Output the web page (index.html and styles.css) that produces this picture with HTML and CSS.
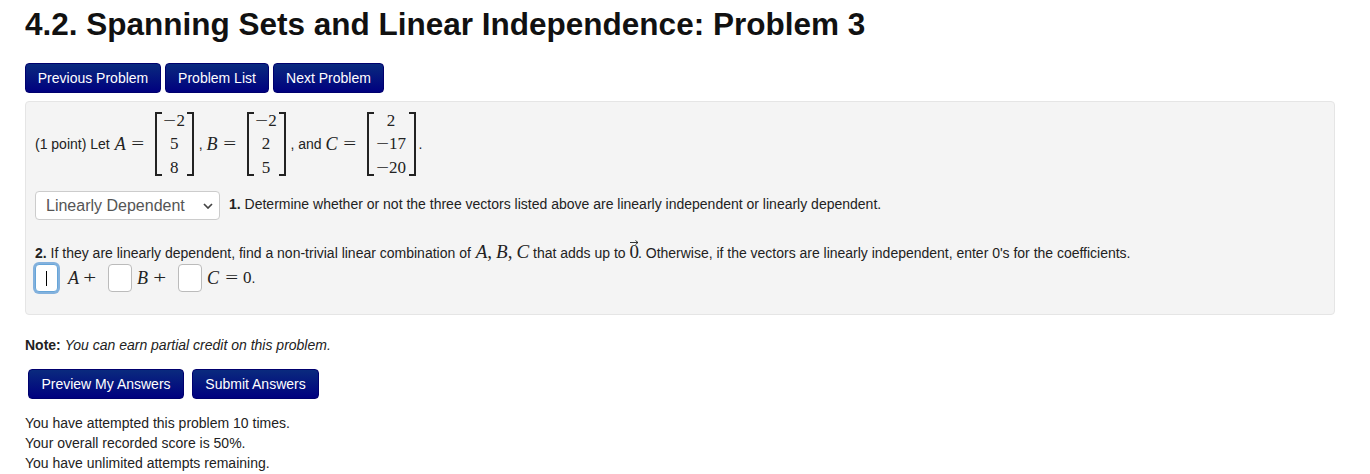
FILE: index.html
```html
<!DOCTYPE html>
<html lang="en">
<head>
<meta charset="utf-8">
<title>4.2. Spanning Sets and Linear Independence: Problem 3</title>
<link rel="stylesheet" href="styles.css">
</head>
<body>
<h1 class="title">4.2. Spanning Sets and Linear Independence: Problem 3</h1>
<nav class="btn-row nav-row">
  <a class="btn btn-prev">Previous Problem</a>
  <a class="btn btn-list">Problem List</a>
  <a class="btn btn-next">Next Problem</a>
</nav>
<section class="panel">
  <div class="statement">
    <span class="lead">(1 point) Let</span>
    <i class="var">A</i><span class="op eq"><span>=</span></span>
    <span class="matrix m-two"><span><span class="minus">−</span>2</span><span>5</span><span>8</span></span>
    <span class="sep sep-b">, </span>
    <i class="var">B</i><span class="op eq"><span>=</span></span>
    <span class="matrix m-two"><span><span class="minus">−</span>2</span><span>2</span><span>5</span></span>
    <span class="sep sep-c">, and </span>
    <i class="var">C</i><span class="op eq"><span>=</span></span>
    <span class="matrix m-three"><span>2</span><span><span class="minus">−</span>17</span><span><span class="minus">−</span>20</span></span>
    <span class="sep sep-end">.</span>
  </div>
  <div class="part-one">
    <div class="select">Linearly Dependent
      <svg class="chev" width="10" height="6" viewBox="0 0 10 6"><path d="M1 1l4 4 4-4" fill="none" stroke="#444" stroke-width="1.7"/></svg>
    </div>
    <p><b>1.</b> Determine whether or not the three vectors listed above are linearly independent or linearly dependent.</p>
  </div>
  <p class="part-two"><b>2.</b> If they are linearly dependent, find a non-trivial linear combination of <span class="big"><i class="gap-a">A</i>,<i class="gap">B</i>,<i class="gap">C</i></span> that adds up to <span class="big vec">0<svg class="arrow" width="9" height="5" viewBox="0 0 9 5"><path d="M0 2.5h8M5.5 .5l2.5 2-2.5 2" fill="none" stroke="#222" stroke-width=".9"/></svg></span><span class="rest">. Otherwise, if the vectors are linearly independent, enter 0's for the coefficients.</span></p>
  <div class="answers">
    <span class="box focus"><span class="caret"></span></span>
    <i class="var a1">A</i><span class="op plus"><span>+</span></span>
    <span class="box box-b"></span>
    <i class="var a2">B</i><span class="op plus plus-b"><span>+</span></span>
    <span class="box box-c"></span>
    <i class="var a2">C</i><span class="op eq eq-0"><span>=</span></span><span class="zero">0</span><span class="period">.</span>
  </div>
</section>
<p class="note"><b>Note:</b> <i>You can earn partial credit on this problem.</i></p>
<div class="btn-row submit-row">
  <a class="btn btn-preview">Preview My Answers</a>
  <a class="btn btn-submit">Submit Answers</a>
</div>
<div class="status">
  <div>You have attempted this problem 10 times.</div>
  <div>Your overall recorded score is 50%.</div>
  <div>You have unlimited attempts remaining.</div>
</div>
</body>
</html>
```
FILE: styles.css
```css
* { box-sizing: border-box; }
html, body { height: 474px; overflow: hidden; }
body {
  margin: 0;
  padding: 0 35px 0 25px;
  background: #fff;
  color: #222;
  font-family: "Liberation Sans", Arial, sans-serif;
  font-size: 14px;
  line-height: 20px;
}
.title {
  margin: 4px 0 0;
  color: #111;
  font-size: 31.5px;
  line-height: 40px;
  font-weight: 700;
}
.btn-row { display: flex; gap: 4px; }
.nav-row { margin-top: 19px; }
.btn {
  display: block;
  height: 30px;
  padding: 0;
  border: 1px solid #00006e;
  border-radius: 4px;
  background: linear-gradient(#0a2a7e, #00007f);
  color: #fff;
  font-size: 14px;
  line-height: 28px;
  text-align: center;
  white-space: nowrap;
}
.btn-prev { width: 136px; }
.btn-list { width: 104px; }
.btn-next { width: 111px; }
.btn-preview { width: 156px; }
.btn-submit { width: 127px; }
.panel {
  height: 214px;
  margin-top: 8px;
  padding: 10px 9px 0;
  background: #f4f4f4;
  border: 1px solid #e5e5e5;
  border-radius: 4px;
}
.statement { display: flex; align-items: center; height: 64px; }
.lead, .sep { white-space: pre; }
.var {
  font-family: "Liberation Serif", serif;
  font-size: 18px;
  line-height: 20px;
  margin-left: 5px;
}
.op {
  display: inline-flex;
  justify-content: center;
  width: 13px;
  font-family: "Liberation Serif", serif;
  font-size: 17px;
}
.op > span { display: inline-block; transform: scaleX(1.35); }
.eq { margin: 0 10px 0 6px; }
.sep-b, .sep-c { margin-left: 5px; margin-right: -5px; }
.sep-end { margin-left: 3px; }
.matrix {
  display: flex;
  flex-direction: column;
  align-items: center;
  justify-content: center;
  height: 64px;
  font-family: "Liberation Serif", serif;
  font-size: 17px;
  line-height: 23.5px;
  border-left: 2px solid #222;
  border-right: 2px solid #222;
  background:
    linear-gradient(#222,#222) left top/5px 2px no-repeat,
    linear-gradient(#222,#222) right top/5px 2px no-repeat,
    linear-gradient(#222,#222) left bottom/5px 2px no-repeat,
    linear-gradient(#222,#222) right bottom/5px 2px no-repeat;
}
.m-two { width: 39px; }
.m-three { width: 49px; }
.minus { display: inline-block; width: 13px; text-align: center; transform: scaleX(1.35); }
.part-one { display: flex; align-items: center; gap: 9px; margin-top: 15px; }
.part-one p { margin: 0; position: relative; top: -2px; }
.select {
  position: relative;
  width: 185px;
  height: 29px;
  padding: 0 10px;
  background: #fff;
  border: 1px solid #ccc;
  border-radius: 4px;
  color: #555;
  font-size: 16px;
  line-height: 28px;
}
.chev { position: absolute; right: 6px; top: 11px; }
.part-two { margin: 23px 0 0; white-space: nowrap; height: 20px; }
.big { font-family: "Liberation Serif", serif; font-size: 19px; line-height: 18px; }
.gap-a { margin-left: 1px; }
.gap { margin-left: 4px; }
.vec { position: relative; display: inline-block; margin-right: -1px; }
.rest { letter-spacing: -0.012px; }
.arrow { position: absolute; left: 0; top: -3px; }
.answers { display: flex; align-items: center; height: 30px; font-family: "Liberation Serif", serif; font-size: 17px; }
.box {
  display: block;
  width: 24px;
  height: 28px;
  background: #fff;
  border: 1px solid #bbb;
  border-radius: 4px;
}
.focus {
  display: flex;
  align-items: center;
  justify-content: center;
  width: 23px;
  border-color: #66a5d8;
  box-shadow: 0 0 0 2px rgba(102,160,215,.8);
}
.caret { width: 1px; height: 15px; background: #000; }
.a1 { margin-left: 10px; }
.a2 { margin-left: 5px; }
.plus { margin: 0 12px 0 4px; }
.plus-b { margin: 0 12px 0 5px; }
.eq-0 { margin: 0 5px 0 6px; }
.zero { font-size: 17px; }
.period { font-family: "Liberation Sans", sans-serif; font-size: 14px; }
.note { margin: 20px 0 0; font-size: 14px; }
.submit-row { margin: 14px 0 0 3px; gap: 8px; }
.status { margin-top: 14px; }
```
